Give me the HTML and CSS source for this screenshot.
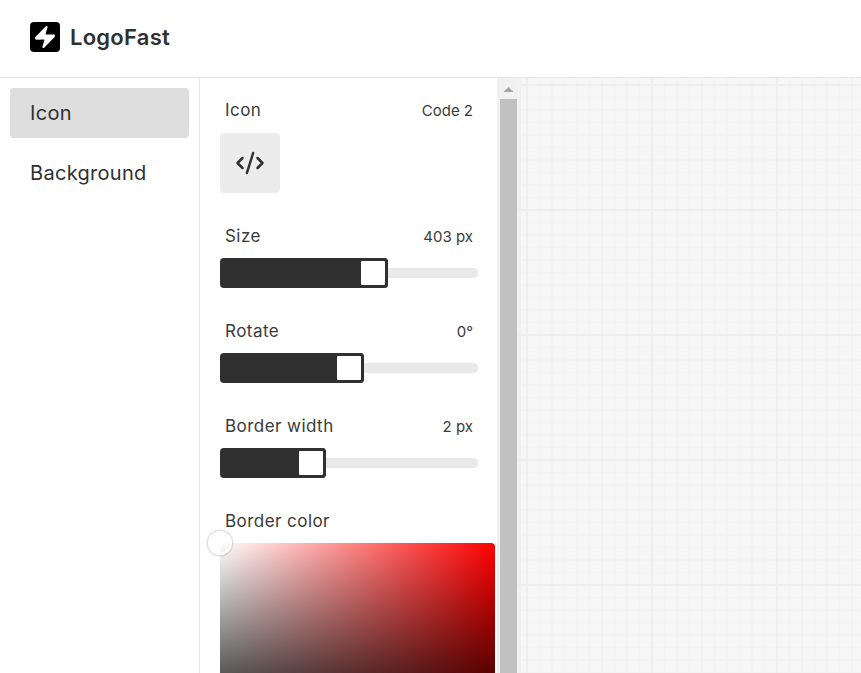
FILE: index.html
```html
<!DOCTYPE html>
<html lang="en">
<head>
  <meta charset="UTF-8" />
  <meta name="viewport" content="width=device-width, initial-scale=1.0"/>
  <title>LogoFast</title>
  <link rel="stylesheet" href="styles.css">
</head>
<body>
  <header class="topbar">
    <svg class="logo-mark" width="30" height="30" viewBox="0 0 30 30">
      <rect width="30" height="30" rx="4" fill="#000"/>
      <path transform="translate(2.4 2.4) scale(1.05)" d="M4 14a1 1 0 0 1-.78-1.63l9.9-10.2a.5.5 0 0 1 .86.46l-1.92 6.02A1 1 0 0 0 13 10h7a1 1 0 0 1 .78 1.63l-9.9 10.2a.5.5 0 0 1-.86-.46l1.92-6.02A1 1 0 0 0 11 14z" fill="#fff" stroke="#fff" stroke-width="1" stroke-linejoin="round"/>
    </svg>
    <span class="logo-name">LogoFast</span>
  </header>

  <div class="main">
    <nav class="tabs">
      <div class="tab active">Icon</div>
      <div class="tab">Background</div>
    </nav>

    <section class="panel">
      <div class="field">
        <div class="row"><span>Icon</span><span class="value">Code 2</span></div>
        <div class="icon-box">
          <svg width="30" height="30" viewBox="0 0 24 24" fill="none" stroke="#303030" stroke-width="2" stroke-linecap="round" stroke-linejoin="round">
            <path d="m18 16 4-4-4-4"/>
            <path d="m6 8-4 4 4 4"/>
            <path d="m14.5 4-5 16"/>
          </svg>
        </div>
      </div>

      <div class="field">
        <div class="row"><span>Size</span><span class="value">403 px</span></div>
        <div class="slider"><div class="fill" style="width: 168px"></div></div>
      </div>

      <div class="field">
        <div class="row"><span>Rotate</span><span class="value">0°</span></div>
        <div class="slider"><div class="fill" style="width: 144px"></div></div>
      </div>

      <div class="field">
        <div class="row"><span>Border width</span><span class="value">2 px</span></div>
        <div class="slider"><div class="fill" style="width: 106px"></div></div>
      </div>

      <div class="field">
        <div class="row"><span>Border color</span></div>
        <div class="picker"><div class="picker-handle"></div></div>
      </div>
    </section>

    <!-- scrollbar of the panel -->
    <div class="scrollbar">
      <div class="scroll-up"></div>
      <div class="scroll-thumb"></div>
    </div>

    <div class="canvas"></div>
  </div>
</body>
</html>
```

FILE: styles.css
```css
* {
  margin: 0;
  padding: 0;
  box-sizing: border-box;
}

body {
  height: 673px;
  display: flex;
  flex-direction: column;
  overflow: hidden;
  background: #fff;
  color: #303030;
  font-family: 'Inter', sans-serif;
}

.topbar {
  height: 78px;
  flex-shrink: 0;
  display: flex;
  align-items: center;
  gap: 10px;
  padding: 0 30px 3px;
  border-bottom: 1px solid #e5e5e5;
}

.logo-name {
  font-size: 22px;
  font-weight: 600;
  letter-spacing: 0.25px;
}

.main {
  flex: 1;
  display: flex;
  min-height: 0;
}

.tabs {
  width: 200px;
  flex-shrink: 0;
  display: flex;
  flex-direction: column;
  gap: 10px;
  padding: 10px 10px 0;
  border-right: 1px solid #e5e5e5;
}

.tab {
  width: 179px;
  height: 50px;
  padding-left: 20px;
  line-height: 50px;
  font-size: 20px;
  letter-spacing: 0.3px;
  border-radius: 4px;
}

.tab.active {
  background: #dedede;
}

.panel {
  width: 297px;
  flex-shrink: 0;
  padding: 20px 2px 0 20px;
  overflow: hidden;
  display: flex;
  flex-direction: column;
  gap: 30px;
}

.row {
  display: flex;
  justify-content: space-between;
  align-items: center;
  width: 258px;
  height: 24px;
  padding: 0 5px;
  font-size: 17px;
  letter-spacing: 0.45px;
  color: #3a3a3a;
}

.field + .field .row {
  padding-top: 2px;
}

.value {
  font-size: 15px;
  letter-spacing: 0;
}

.icon-box {
  width: 60px;
  height: 60px;
  margin-top: 11px;
  display: flex;
  align-items: center;
  justify-content: center;
  background: #ececec;
  border-radius: 4px;
}

.slider {
  position: relative;
  width: 258px;
  height: 30px;
  margin-top: 11px;
  display: flex;
  align-items: center;
}

.slider::before {
  content: "";
  width: 100%;
  height: 10px;
  background: #e9e9e9;
  border-radius: 4px;
}

.fill {
  position: absolute;
  top: 0;
  left: 0;
  height: 30px;
  background: #303030;
  border-radius: 4px;
}

.fill::after {
  content: "";
  box-sizing: border-box;
  position: absolute;
  top: 0;
  right: 0;
  width: 30px;
  height: 30px;
  background: #fff;
  border: 3px solid #303030;
  border-radius: 4px;
}

.picker {
  position: relative;
  width: 275px;
  height: 200px;
  margin-top: 11px;
  border-radius: 4px;
  background:
    linear-gradient(to top, #000, transparent),
    linear-gradient(to right, #fff, #f00);
}

.picker-handle {
  position: absolute;
  top: -12px;
  left: -12px;
  width: 24px;
  height: 24px;
  border: 2px solid #fff;
  border-radius: 50%;
  box-shadow: 0 0 3px rgba(0, 0, 0, 0.4);
}

.scrollbar {
  width: 21px;
  flex-shrink: 0;
  padding: 0 1px 0 3px;
  background: #f1f1f1;
}

.scroll-up {
  height: 21px;
  display: flex;
  justify-content: center;
  padding-top: 9px;
}

.scroll-up::before {
  content: "";
  width: 10px;
  height: 5px;
  background: #a3a3a3;
  clip-path: polygon(50% 0, 100% 100%, 0 100%);
}

.scroll-thumb {
  height: 600px;
  background: #c1c1c1;
}

.canvas {
  flex: 1;
  background-color: #f6f6f6;
  background-image:
    linear-gradient(to right, #f0f0f0 2px, transparent 2px),
    linear-gradient(to right, #eeeeee 2px, transparent 2px),
    linear-gradient(to bottom, #eeeeee 2px, transparent 2px),
    linear-gradient(to right, #f3f3f3 2px, transparent 2px),
    linear-gradient(to bottom, #f3f3f3 2px, transparent 2px);
  background-size: 2px 100%, 125px 125px, 125px 125px, 12.5px 12.5px, 12.5px 12.5px;
  background-position: 1px 0, 8px 6px, 8px 6px, 8px 6px, 8px 6px;
  background-repeat: no-repeat, repeat, repeat, repeat, repeat;
}
```
